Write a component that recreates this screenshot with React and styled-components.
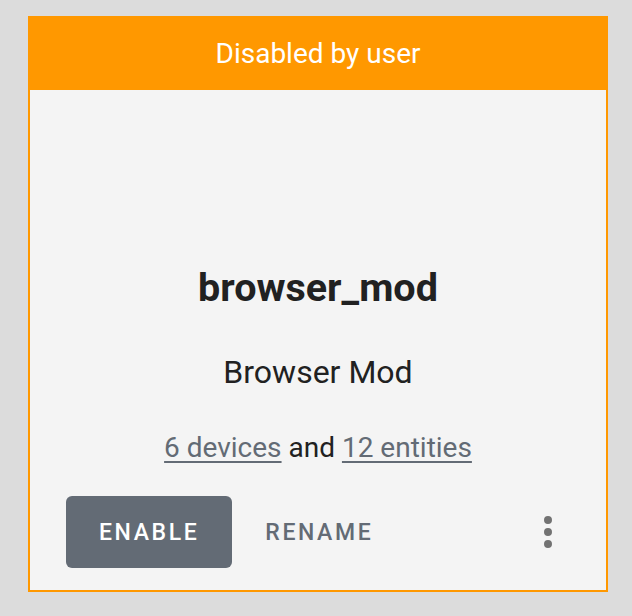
import React from 'react';
import styled, { createGlobalStyle } from 'styled-components';

const GlobalStyle = createGlobalStyle`
  html, body {
    margin: 0;
    padding: 0;
    background: #dcdcdc;
    font-family: Roboto, "Noto Sans", sans-serif;
  }
`;

const Page = styled.div`
  width: 632px;
  height: 616px;
  padding: 16px 24px 0 28px;
  box-sizing: border-box;
`;

const Card = styled.div`
  width: 580px;
  height: 576px;
  box-sizing: border-box;
  border: 2px solid #ff9800;
  background: #f4f4f4;
  display: flex;
  flex-direction: column;
`;

const Banner = styled.div`
  height: 74px;
  flex-shrink: 0;
  background: #ff9800;
  color: #fff;
  font-size: 28px;
  display: flex;
  align-items: center;
  justify-content: center;
  margin: -2px -2px 0;
`;

const Content = styled.div`
  flex: 1;
  display: flex;
  flex-direction: column;
  align-items: center;
  justify-content: flex-end;
  color: #212121;
  padding-bottom: 31px;
`;

const Domain = styled.div`
  font-size: 39.5px;
  font-weight: 700;
  line-height: 46px;
`;

const Title = styled.div`
  font-size: 32px;
  line-height: 38px;
  margin-top: 42px;
`;

const Info = styled.div`
  font-size: 28px;
  line-height: 34px;
  margin-top: 40px;
`;

const InfoLink = styled.a`
  color: #636b75;
  text-decoration: underline;
  text-underline-offset: 4px;
  text-decoration-thickness: 2px;
`;

const Actions = styled.div`
  display: flex;
  align-items: center;
  padding: 0 34px 22px 36px;
`;

const Button = styled.button`
  height: 72px;
  padding: 0 33px;
  border: none;
  border-radius: 6px;
  background: ${p => (p.$primary ? '#636b75' : 'transparent')};
  color: ${p => (p.$primary ? '#fff' : '#636b75')};
  font-family: Roboto, "Noto Sans", sans-serif;
  font-size: 23px;
  font-weight: 500;
  letter-spacing: 2.6px;
  text-transform: uppercase;
  cursor: pointer;
`;

const Spacer = styled.div`
  flex: 1;
`;

const IconButton = styled.button`
  width: 48px;
  height: 48px;
  border: none;
  padding: 0;
  background: transparent;
  color: #727272;
  display: flex;
  align-items: center;
  justify-content: center;
`;

const DotsIcon = () => (
  <svg width="48" height="48" viewBox="0 0 24 24" fill="currentColor">
    <path d="M12,16A2,2 0 0,1 14,18A2,2 0 0,1 12,20A2,2 0 0,1 10,18A2,2 0 0,1 12,16M12,10A2,2 0 0,1 14,12A2,2 0 0,1 12,14A2,2 0 0,1 10,12A2,2 0 0,1 12,10M12,4A2,2 0 0,1 14,6A2,2 0 0,1 12,8A2,2 0 0,1 10,6A2,2 0 0,1 12,4Z" />
  </svg>
);

export default function App() {
  return (
    <>
      <GlobalStyle />
      <Page>
        <Card>
          <Banner>Disabled by user</Banner>
          <Content>
            <Domain>browser_mod</Domain>
            <Title>Browser Mod</Title>
            <Info>
              <InfoLink>6 devices</InfoLink> and <InfoLink>12 entities</InfoLink>
            </Info>
          </Content>
          <Actions>
            <Button $primary>Enable</Button>
            <Button>Rename</Button>
            <Spacer />
            <IconButton aria-label="More">
              <DotsIcon />
            </IconButton>
          </Actions>
        </Card>
      </Page>
    </>
  );
}
